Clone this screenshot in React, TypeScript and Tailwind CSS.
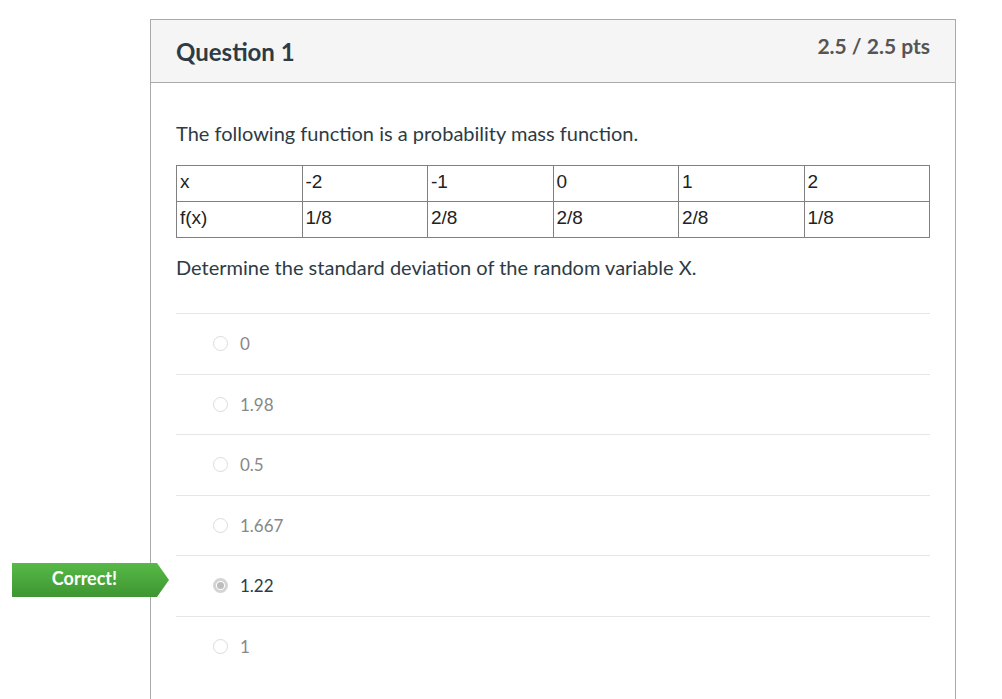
const xs = ['x', '-2', '-1', '0', '1', '2'];
const fx = ['f(x)', '1/8', '2/8', '2/8', '2/8', '1/8'];

const answers = [
  { label: '0', picked: false },
  { label: '1.98', picked: false },
  { label: '0.5', picked: false },
  { label: '1.667', picked: false },
  { label: '1.22', picked: true },
  { label: '1', picked: false },
];

function Radio({ picked }: { picked: boolean }) {
  if (picked) {
    return (
      <span className="flex h-[15px] w-[15px] items-center justify-center rounded-full border-[3px] border-[#d4d4d4] bg-white">
        <span className="h-[7px] w-[7px] rounded-full bg-[#bdbdbd]" />
      </span>
    );
  }
  return <span className="block h-[15px] w-[15px] rounded-full border border-[#dcdcdc] bg-white" />;
}

export default function App() {
  return (
    <div className="min-h-screen bg-white pl-[150px] pt-[19px] text-[#2d3b45]" style={{ fontFamily: 'Lato, "Noto Sans", sans-serif' }}>
      <div className="h-[680px] w-[806px] border border-b-0 border-[#aaaaaa]">
        <div className="flex h-[63px] justify-between border-b border-[#aaaaaa] bg-[#f5f5f5] px-[25px]">
          <h2 className="self-center pt-[1px] text-[24px] font-bold">Question 1</h2>
          <div className="pt-[10px] text-[21px] font-bold text-[#555555]">2.5 / 2.5 pts</div>
        </div>

        <div className="px-[25px] pt-[35px]">
          <p className="text-[20px] leading-[30px]">The following function is a probability mass function.</p>

          <table
            className="mt-[17px] w-full table-fixed border-collapse text-[19px] text-[#222]"
            style={{ fontFamily: '"Liberation Sans", Arial, sans-serif' }}
          >
            <tbody>
              {[xs, fx].map((row, i) => (
                <tr key={i} className="h-[36px]">
                  {row.map((c, j) => (
                    <td key={j} className="border border-[#808080] px-[3px] pb-[4px] align-middle leading-[24px]">
                      {c}
                    </td>
                  ))}
                </tr>
              ))}
            </tbody>
          </table>

          <p className="mt-[14px] text-[20px] leading-[30px]">Determine the standard deviation of the random variable X.</p>

          <div className="mt-[31px]">
            {answers.map((a) => (
              <div key={a.label} className="relative flex h-[60.5px] items-center border-t border-[#e6e6e6] pl-[37px]">
                {a.picked && (
                  <div className="absolute left-[-164px] top-[7px] h-[34px] w-[157px]">
                    <div className="flex h-full w-full items-center bg-gradient-to-b from-[#58b947] to-[#3d9632] [clip-path:polygon(0_0,145px_0,157px_50%,145px_100%,0_100%)]">
                      <span className="w-[145px] pb-[4px] text-center text-[18px] font-bold text-white">Correct!</span>
                    </div>
                  </div>
                )}
                <Radio picked={a.picked} />
                <span className={`ml-[12px] text-[17px] ${a.picked ? 'text-[#2d3b45]' : 'text-[#888888]'}`}>{a.label}</span>
              </div>
            ))}
          </div>
        </div>
      </div>
    </div>
  );
}
